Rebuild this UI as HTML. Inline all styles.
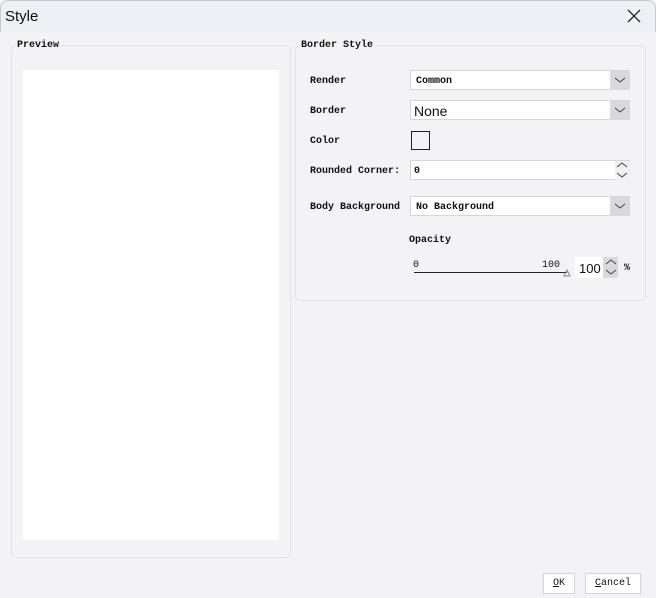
<!DOCTYPE html>
<html><head><style>
*{margin:0;padding:0;box-sizing:border-box}
body{width:656px;height:598px;background:#f3f3f5;position:relative;overflow:hidden;font-family:"Liberation Mono",monospace;font-size:10px;font-weight:bold;color:#111}
.a{position:absolute}
.title{left:0;top:0;width:656px;height:32px;background:#eef0f5;border-top:1px solid #c8c8cc;border-left:1px solid #c8c8cc;border-right:1px solid #c8c8cc;border-radius:8px 8px 0 0}
.grp{border:1px solid #e2e2e6;border-radius:5px}
.leg{background:#f3f3f5;padding:0 2px}
.box{background:#fff;border:1px solid #d6d6da}
.dd{background:#d9d9dd}
.btn{background:#fff;border:1px solid #d6d6da;text-align:center;line-height:19px;font-weight:normal}
</style></head><body>
<div class="a title"></div>
<div class="a" style="left:5px;top:8px;font-family:'Liberation Sans',sans-serif;font-size:15px;font-weight:normal;color:#111">Style</div>
<svg class="a" style="left:627px;top:9px" width="14" height="14"><path d="M1 1L13 13M13 1L1 13" stroke="#222" stroke-width="1.3"/></svg>

<div class="a grp" style="left:11px;top:45px;width:280px;height:513px"></div>
<div class="a leg" style="left:15px;top:40px">Preview</div>
<div class="a" style="left:23px;top:70px;width:256px;height:470px;background:#fff"></div>

<div class="a grp" style="left:295px;top:45px;width:351px;height:256px"></div>
<div class="a leg" style="left:299px;top:40px">Border Style</div>

<div class="a" style="left:310px;top:76px">Render</div>
<div class="a box" style="left:410px;top:70px;width:220px;height:20px"></div>
<div class="a dd" style="left:610px;top:71px;width:20px;height:19px"></div>
<div class="a" style="left:416px;top:76px">Common</div>

<div class="a" style="left:310px;top:106px">Border</div>
<div class="a box" style="left:410px;top:100px;width:220px;height:20px"></div>
<div class="a dd" style="left:610px;top:101px;width:20px;height:19px"></div>
<div class="a" style="left:414px;top:103px;font-family:'Liberation Sans',sans-serif;font-size:14px;font-weight:normal">None</div>

<div class="a" style="left:310px;top:136px">Color</div>
<div class="a" style="left:411px;top:131px;width:19px;height:19px;border:1px solid #222"></div>

<div class="a" style="left:310px;top:166px">Rounded Corner:</div>
<div class="a box" style="left:410px;top:160px;width:220px;height:20px"></div>
<div class="a" style="left:615px;top:161px;width:15px;height:19px;background:#f0f0f2"></div>
<div class="a" style="left:414px;top:166px">0</div>

<div class="a" style="left:310px;top:202px">Body Background</div>
<div class="a box" style="left:410px;top:196px;width:220px;height:20px"></div>
<div class="a dd" style="left:610px;top:197px;width:20px;height:19px"></div>
<div class="a" style="left:416px;top:202px">No Background</div>

<div class="a" style="left:409px;top:235px">Opacity</div>
<div class="a" style="left:413px;top:260px;font-weight:normal">0</div>
<div class="a" style="left:542px;top:260px;font-weight:normal">100</div>
<div class="a" style="left:575px;top:257px;width:28px;height:21px;background:#fff"></div>
<div class="a" style="left:603px;top:257px;width:15px;height:21px;background:#d9d9dd"></div>
<div class="a" style="left:579px;top:261px;font-family:'Liberation Sans',sans-serif;font-size:13px;font-weight:normal">100</div>
<div class="a" style="left:624px;top:263px">%</div>

<svg class="a" style="left:0;top:0" width="656" height="598" fill="none" stroke="#444" stroke-width="1">
<path d="M615 78l5 4 5-4M615 108l5 4 5-4M615 204l5 4 5-4"/>
<path d="M617 167l5-4 5 4M617 173l5 4 5-4"/>
<path d="M606 264l5-4 5 4M606 270l5 4 5-4"/>
<path d="M414 272.5H567" stroke="#222"/>
<path d="M564 276l3-6 3 6z" stroke="#888"/>
</svg>

<div class="a btn" style="left:543px;top:573px;width:32px;height:21px"><u>O</u>K</div>
<div class="a btn" style="left:585px;top:573px;width:56px;height:21px"><u>C</u>ancel</div>
</body></html>
